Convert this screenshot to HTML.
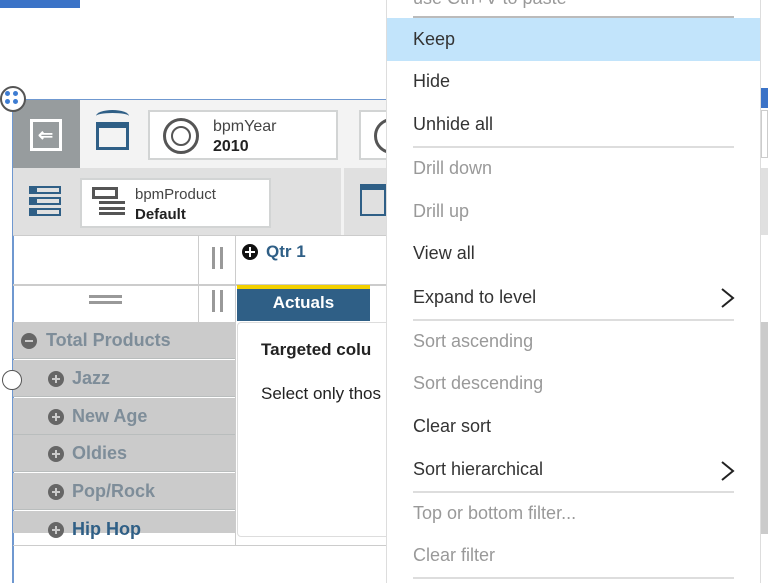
<!DOCTYPE html><html><head><style>
*{margin:0;padding:0;box-sizing:border-box}
body{width:768px;height:583px;overflow:hidden;background:#fff;font-family:"Liberation Sans",sans-serif;position:relative}
.a{position:absolute}
.mi{position:absolute;left:413px;font-size:18px;color:#333;line-height:20px}
.d{color:#999}
.sep{position:absolute;left:413px;width:321px;height:2px;background:#ddd}
.row{position:absolute;left:13px;width:222px;height:37px;background:#cbcbcb;border-bottom:1px solid #b9bdbd;font-weight:bold;font-size:18px;color:#7e8d99}
.pl{position:absolute;width:16px;height:16px;border-radius:50%;background:#666;top:11px}
.pl:before{content:"";position:absolute;left:4px;top:7px;width:8px;height:2px;background:#cbcbcb}
.pl.p:after{content:"";position:absolute;left:7px;top:4px;width:2px;height:8px;background:#cbcbcb}
</style></head><body>
<div class="a" style="left:0;top:0;width:80px;height:8px;background:#3b73c7"></div>
<!-- panel -->
<div class="a" style="left:12px;top:99px;width:380px;height:484px;border-left:2px solid #6f98d0;border-top:1px solid #6f98d0"></div>
<div class="a" style="left:13px;top:100px;width:375px;height:68px;background:#f3f3f3"></div>
<div class="a" style="left:13px;top:100px;width:67px;height:68px;background:#979c9e"></div>
<div class="a" style="left:30px;top:119px;width:32px;height:32px;border:3px solid #fff"></div>
<div class="a" style="left:38px;top:125px;font-size:18px;color:#fff;font-weight:bold">⇐</div>
<div class="a" style="left:96px;top:116px;width:33px;height:34px;border-top:12px solid #2f5f86;border-left:3px solid #2f5f86;border-right:3px solid #2f5f86;border-bottom:3px solid #2f5f86"></div>
<div class="a" style="left:96px;top:110px;width:33px;height:12px;border-top:3px solid #2f5f86;border-radius:50% 50% 0 0;background:#f3f3f3"></div>
<div class="a" style="left:148px;top:110px;width:190px;height:50px;background:#fff;border:2px solid #d2d4d4"></div>
<div class="a" style="left:163px;top:118px;width:36px;height:36px;border-radius:50%;border:3px solid #555"></div>
<div class="a" style="left:171px;top:126px;width:20px;height:20px;border-radius:50%;border:2px solid #555"></div>
<div class="a" style="left:213px;top:118px;font-size:16px;color:#444">bpmYear</div>
<div class="a" style="left:213px;top:138px;font-size:16px;color:#222;font-weight:bold">2010</div>
<div class="a" style="left:359px;top:110px;width:30px;height:50px;background:#fff;border:2px solid #d2d4d4"></div>
<div class="a" style="left:374px;top:118px;width:36px;height:36px;border-radius:50%;border:3px solid #555"></div>
<div class="a" style="left:13px;top:168px;width:375px;height:67px;background:#e0e0e0"></div>
<div class="a" style="left:341px;top:168px;width:3px;height:67px;background:#f3f3f3"></div>
<div class="a" style="left:29px;top:186px;width:32px;height:8px;border:2px solid #2f5f86;border-left:8px solid #2f5f86"></div>
<div class="a" style="left:29px;top:197px;width:32px;height:8px;border:2px solid #2f5f86;border-left:8px solid #2f5f86"></div>
<div class="a" style="left:29px;top:208px;width:32px;height:8px;border:2px solid #2f5f86;border-left:8px solid #2f5f86"></div>
<div class="a" style="left:80px;top:178px;width:191px;height:50px;background:#fff;border:2px solid #d2d4d4"></div>
<div class="a" style="left:92px;top:187px;width:26px;height:12px;border:3px solid #555"></div>
<div class="a" style="left:99px;top:201px;width:26px;height:14px;border-top:3px solid #555;border-bottom:3px solid #555"></div>
<div class="a" style="left:99px;top:207px;width:26px;height:3px;background:#555"></div>
<div class="a" style="left:135px;top:186px;font-size:15px;color:#444">bpmProduct</div>
<div class="a" style="left:135px;top:206px;font-size:15px;color:#222;font-weight:bold">Default</div>
<div class="a" style="left:360px;top:184px;width:26px;height:32px;border:2px solid #2f5f86;border-top:6px solid #2f5f86"></div>
<!-- grid header -->
<div class="a" style="left:13px;top:235px;width:375px;height:1px;background:#ccc"></div>
<div class="a" style="left:198px;top:236px;width:38px;height:86px;border-left:1px solid #ccc;border-right:1px solid #ccc"></div>
<div class="a" style="left:212px;top:247px;width:3px;height:22px;background:#999;box-shadow:8px 0 #999"></div>
<div class="a" style="left:212px;top:290px;width:3px;height:22px;background:#999;box-shadow:8px 0 #999"></div>
<div class="a" style="left:13px;top:284px;width:375px;height:2px;background:#ccc"></div>
<div class="a" style="left:89px;top:295px;width:33px;height:3px;background:#999;box-shadow:0 6px #999"></div>
<div class="a" style="left:242px;top:244px;width:16px;height:16px;border-radius:50%;background:#111"></div>
<div class="a" style="left:245px;top:251px;width:10px;height:2px;background:#fff"></div>
<div class="a" style="left:249px;top:247px;width:2px;height:10px;background:#fff"></div>
<div class="a" style="left:266px;top:242px;font-size:17px;font-weight:bold;color:#2f5f86">Qtr 1</div>
<div class="a" style="left:237px;top:285px;width:133px;height:36px;background:#2f5f86;border-top:4px solid #f2d000;color:#fff;font-weight:bold;font-size:17px;text-align:center;line-height:28px">Actuals</div>
<!-- rows -->
<div class="row" style="top:322px"><div class="pl" style="left:8px"></div><span class="a" style="left:33px;top:8px">Total Products</span></div>
<div class="row" style="top:360px"><div class="pl p" style="left:35px"></div><span class="a" style="left:59px;top:8px">Jazz</span></div>
<div class="row" style="top:398px"><div class="pl p" style="left:35px"></div><span class="a" style="left:59px;top:8px">New Age</span></div>
<div class="row" style="top:435px"><div class="pl p" style="left:35px"></div><span class="a" style="left:59px;top:8px">Oldies</span></div>
<div class="row" style="top:473px"><div class="pl p" style="left:35px"></div><span class="a" style="left:59px;top:8px">Pop/Rock</span></div>
<div class="row" style="top:511px;height:22px;border:none"><div class="pl p" style="left:35px"></div></div>
<div class="a" style="left:72px;top:519px;font-size:18px;font-weight:bold;color:#2f5f86">Hip Hop</div>
<div class="a" style="left:13px;top:545px;width:375px;height:1px;background:#ccc"></div>
<div class="a" style="left:235px;top:322px;width:1px;height:224px;background:#ccc"></div>
<div class="a" style="left:2px;top:370px;width:20px;height:20px;border-radius:50%;border:1.5px solid #555;background:#fff"></div>
<div class="a" style="left:237px;top:322px;width:160px;height:215px;background:#fff;border:1px solid #ddd;border-radius:4px"></div>
<div class="a" style="left:261px;top:340px;font-size:17px;font-weight:bold;color:#222">Targeted colu</div>
<div class="a" style="left:261px;top:384px;font-size:17px;color:#222">Select only thos</div>
<div class="a" style="left:0;top:86px;width:26px;height:26px;border-radius:50%;border:2px solid #555;background:#fff"></div>
<div class="a" style="left:5px;top:91px;width:5px;height:5px;border-radius:50%;background:#3d7cd2;box-shadow:8px 0 #3d7cd2,0 8px #3d7cd2,8px 8px #3d7cd2"></div>
<!-- right strip -->
<div class="a" style="left:761px;top:88px;width:7px;height:20px;background:#3b73c7"></div>
<div class="a" style="left:761px;top:110px;width:7px;height:48px;border:1px solid #ccc"></div>
<div class="a" style="left:761px;top:168px;width:7px;height:67px;background:#e0e0e0"></div>
<div class="a" style="left:761px;top:322px;width:7px;height:212px;background:#cbcbcb"></div>
<!-- menu -->
<div class="a" style="left:386px;top:0;width:375px;height:583px;background:#fff;border-left:1px solid #ddd;border-right:1px solid #ddd"></div>
<div class="mi d" style="top:-12px">use Ctrl+V to paste</div>
<div class="sep" style="top:16px;background:#bbb"></div>
<div class="a" style="left:387px;top:18px;width:373px;height:43px;background:#c2e4fb"></div>
<div class="mi" style="top:29px">Keep</div>
<div class="mi" style="top:71px">Hide</div>
<div class="mi" style="top:114px">Unhide all</div>
<div class="sep" style="top:146px"></div>
<div class="mi d" style="top:158px">Drill down</div>
<div class="mi d" style="top:201px">Drill up</div>
<div class="mi" style="top:243px">View all</div>
<div class="mi" style="top:287px">Expand to level</div>
<div class="sep" style="top:319px"></div>
<div class="mi d" style="top:331px">Sort ascending</div>
<div class="mi d" style="top:373px">Sort descending</div>
<div class="mi" style="top:416px">Clear sort</div>
<div class="mi" style="top:459px">Sort hierarchical</div>
<div class="sep" style="top:491px"></div>
<div class="mi d" style="top:503px">Top or bottom filter...</div>
<div class="mi d" style="top:545px">Clear filter</div>
<div class="sep" style="top:577px"></div>
<svg class="a" style="left:718px;top:286px" width="20" height="24"><path d="M4 3L15 12L4 21" fill="none" stroke="#222" stroke-width="2"/></svg>
<svg class="a" style="left:718px;top:459px" width="20" height="24"><path d="M4 3L15 12L4 21" fill="none" stroke="#222" stroke-width="2"/></svg>
</body></html>
